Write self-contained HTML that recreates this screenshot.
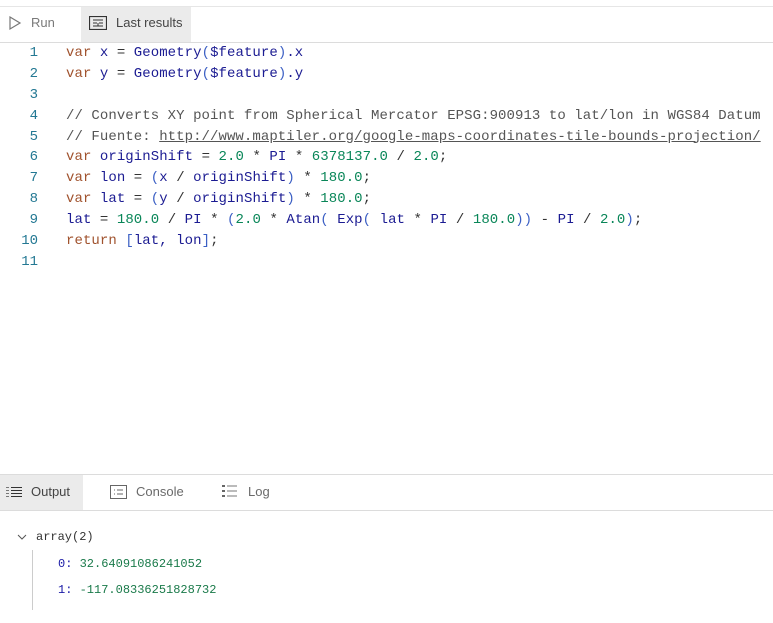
<!DOCTYPE html>
<html><head><style>
body{margin:0;width:773px;height:623px;background:#fff;position:relative;overflow:hidden;font-family:"Liberation Sans",sans-serif}
.ab{position:absolute}
.tab{position:absolute;font-size:13px;color:#6a6a6a;line-height:35px}
.code{position:absolute;left:0;top:43px;font-family:"Liberation Mono",monospace;font-size:14px;letter-spacing:0.07px}
.l{height:20.9px;line-height:21.5px;white-space:pre;position:relative}
.n{position:absolute;left:0;width:38px;text-align:right;color:#237893;letter-spacing:0}
.t{position:absolute;left:66px;color:#1b1b92}
.k{color:#a0522d}.g{color:#098658}.o{color:#333}.c{color:#555}.p{color:#3b5fc4}
.out{font-family:"Liberation Mono",monospace;font-size:12px;position:absolute}
</style></head><body>
<div class="ab" style="left:0;top:6px;width:773px;height:1px;background:#e6e6e6"></div>
<div class="ab" style="left:81px;top:7px;width:110px;height:35px;background:#ebebeb"></div>
<div class="ab" style="left:0;top:42px;width:773px;height:1px;background:#dcdcdc"></div>
<svg class="ab" style="left:8px;top:15px" width="14" height="16"><path d="M2 2 L12 8 L2 14 Z" fill="none" stroke="#777" stroke-width="1.2"/></svg>
<div class="tab" style="left:31px;top:5px;color:#7a7a7a">Run</div>
<svg class="ab" style="left:89px;top:16px" width="18" height="14"><rect x="0.5" y="0.5" width="17" height="13" fill="none" stroke="#333" stroke-width="1.2"/><path d="M4 4h10M4 7h4M10 7h4M4 10h10M9 7v3" stroke="#333" stroke-width="1"/></svg>
<div class="tab" style="left:116px;top:5px;color:#444">Last results</div>
<div class="code">
<div class="l"><span class="n">1</span><span class="t"><span class="k">var</span> x <span class="o">=</span> Geometry<span class="p">(</span>$feature<span class="p">)</span>.x</span></div>
<div class="l"><span class="n">2</span><span class="t"><span class="k">var</span> y <span class="o">=</span> Geometry<span class="p">(</span>$feature<span class="p">)</span>.y</span></div>
<div class="l"><span class="n">3</span></div>
<div class="l"><span class="n">4</span><span class="t c">// Converts XY point from Spherical Mercator EPSG:900913 to lat/lon in WGS84 Datum</span></div>
<div class="l"><span class="n">5</span><span class="t c">// Fuente: <u>http://www.maptiler.org/google-maps-coordinates-tile-bounds-projection/</u></span></div>
<div class="l"><span class="n">6</span><span class="t"><span class="k">var</span> originShift <span class="o">=</span> <span class="g">2.0</span> <span class="o">*</span> PI <span class="o">*</span> <span class="g">6378137.0</span> <span class="o">/</span> <span class="g">2.0</span><span class="o">;</span></span></div>
<div class="l"><span class="n">7</span><span class="t"><span class="k">var</span> lon <span class="o">=</span> <span class="p">(</span>x <span class="o">/</span> originShift<span class="p">)</span> <span class="o">*</span> <span class="g">180.0</span><span class="o">;</span></span></div>
<div class="l"><span class="n">8</span><span class="t"><span class="k">var</span> lat <span class="o">=</span> <span class="p">(</span>y <span class="o">/</span> originShift<span class="p">)</span> <span class="o">*</span> <span class="g">180.0</span><span class="o">;</span></span></div>
<div class="l"><span class="n">9</span><span class="t">lat <span class="o">=</span> <span class="g">180.0</span> <span class="o">/</span> PI <span class="o">*</span> <span class="p">(</span><span class="g">2.0</span> <span class="o">*</span> Atan<span class="p">(</span> Exp<span class="p">(</span> lat <span class="o">*</span> PI <span class="o">/</span> <span class="g">180.0</span><span class="p">))</span> <span class="o">-</span> PI <span class="o">/</span> <span class="g">2.0</span><span class="p">)</span><span class="o">;</span></span></div>
<div class="l"><span class="n">10</span><span class="t"><span class="k">return</span> <span class="p">[</span>lat, lon<span class="p">]</span><span class="o">;</span></span></div>
<div class="l"><span class="n">11</span></div>
</div>
<div class="ab" style="left:0;top:474px;width:773px;height:1px;background:#dcdcdc"></div>
<div class="ab" style="left:0;top:475px;width:83px;height:35px;background:#ebebeb"></div>
<div class="ab" style="left:0;top:510px;width:773px;height:1px;background:#dcdcdc"></div>
<svg class="ab" style="left:6px;top:486px" width="18" height="14"><path d="M0 1.5h3M0 4.5h3M0 7.5h3M0 10.5h3" stroke="#777"/><path d="M5 1.5h11M5 4.5h11M5 7.5h11M5 10.5h11" stroke="#333"/></svg>
<div class="tab" style="left:31px;top:474px;color:#444">Output</div>
<svg class="ab" style="left:110px;top:485px" width="18" height="14"><rect x="0.5" y="0.5" width="16" height="13" fill="none" stroke="#666"/><path d="M4 5h1M4 9h1M7 5h6M7 9h6" stroke="#666"/></svg>
<div class="tab" style="left:136px;top:474px">Console</div>
<svg class="ab" style="left:221px;top:484px" width="18" height="16"><path d="M1 2h3M1 7h3M1 12h3" stroke="#666" stroke-width="2"/><path d="M6 2h10M6 7h10M6 12h10" stroke="#777"/></svg>
<div class="tab" style="left:248px;top:474px">Log</div>
<svg class="ab" style="left:17px;top:533px" width="10" height="8"><path d="M1 2l4 4 4-4" fill="none" stroke="#555"/></svg>
<div class="out" style="left:36px;top:530px;color:#333">array(2)</div>
<div class="ab" style="left:32px;top:550px;width:1px;height:60px;background:#ccc"></div>
<div class="out" style="left:58px;top:557px"><span style="color:#1a1aa6">0:</span> <span style="color:#1a7a4a">32.64091086241052</span></div>
<div class="out" style="left:58px;top:583px"><span style="color:#1a1aa6">1:</span> <span style="color:#1a7a4a">-117.08336251828732</span></div>
</body></html>
